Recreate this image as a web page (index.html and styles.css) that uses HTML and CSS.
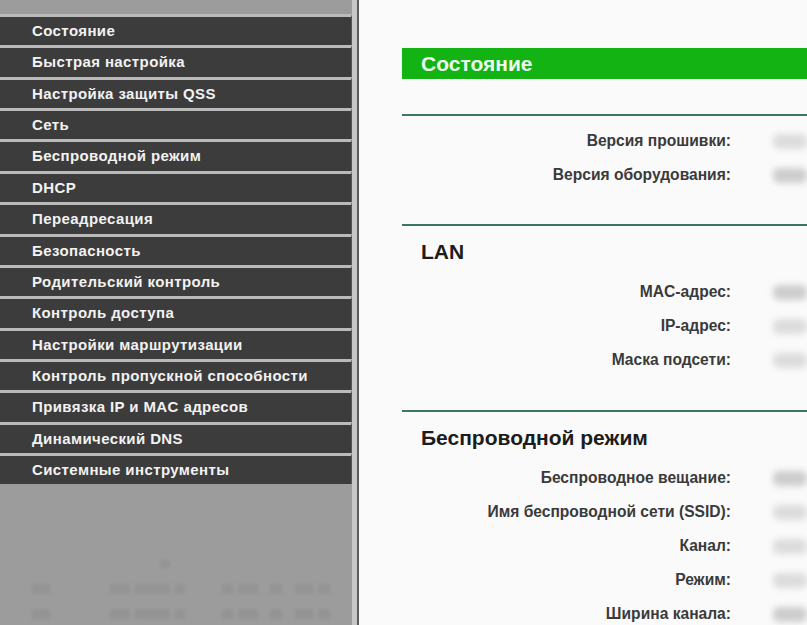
FILE: index.html
```html
<!DOCTYPE html>
<html lang="ru">
<head>
<meta charset="utf-8">
<title>Состояние</title>
<link rel="stylesheet" href="styles.css">
</head>
<body>
<div class="page">
  <aside class="sidebar">
    <ul class="menu">
      <li>Состояние</li>
      <li>Быстрая настройка</li>
      <li>Настройка защиты QSS</li>
      <li>Сеть</li>
      <li>Беспроводной режим</li>
      <li>DHCP</li>
      <li>Переадресация</li>
      <li>Безопасность</li>
      <li>Родительский контроль</li>
      <li>Контроль доступа</li>
      <li>Настройки маршрутизации</li>
      <li>Контроль пропускной способности</li>
      <li>Привязка IP и MAC адресов</li>
      <li>Динамический DNS</li>
      <li>Системные инструменты</li>
    </ul>
    <div class="ghost">
      <div class="ghost-dot"></div>
      <div class="ghost-row"><span class="g a"></span><span class="g b"></span><span class="g c"></span><span class="g d"></span><span class="g e"></span><span class="g f"></span><span class="g h"></span><span class="g i"></span><span class="g j"></span></div>
      <div class="ghost-row"><span class="g a"></span><span class="g b"></span><span class="g c"></span><span class="g d"></span><span class="g e"></span><span class="g f"></span><span class="g h"></span><span class="g i"></span><span class="g j"></span></div>
    </div>
  </aside>
  <div class="divider"><div class="divider-light"></div><div class="divider-dark"></div></div>
  <main class="content">
    <div class="title-bar">Состояние</div>
    <section class="section first">
      <div class="row"><span class="label">Версия прошивки:</span><span class="value v2"></span></div>
      <div class="row"><span class="label">Версия оборудования:</span><span class="value v1"></span></div>
    </section>
    <section class="section">
      <h2 class="heading">LAN</h2>
      <div class="row"><span class="label">MAC-адрес:</span><span class="value v1"></span></div>
      <div class="row"><span class="label">IP-адрес:</span><span class="value v2"></span></div>
      <div class="row"><span class="label">Маска подсети:</span><span class="value v2"></span></div>
    </section>
    <section class="section">
      <h2 class="heading">Беспроводной режим</h2>
      <div class="row"><span class="label">Беспроводное вещание:</span><span class="value v1"></span></div>
      <div class="row"><span class="label">Имя беспроводной сети (SSID):</span><span class="value v2"></span></div>
      <div class="row"><span class="label">Канал:</span><span class="value v2"></span></div>
      <div class="row"><span class="label">Режим:</span><span class="value v2"></span></div>
      <div class="row"><span class="label">Ширина канала:</span><span class="value v1"></span></div>
    </section>
  </main>
</div>
</body>
</html>
```
FILE: styles.css
```css
html, body {
  margin: 0;
  padding: 0;
  height: 100%;
  overflow: hidden;
}
body {
  font-family: "Liberation Sans", Arial, sans-serif;
  background: #fafafa;
}
.page {
  display: flex;
  height: 625px;
  width: 807px;
}
.sidebar {
  width: 352px;
  flex: none;
  background: #9c9c9c;
  display: flex;
  flex-direction: column;
}
.menu {
  list-style: none;
  margin: 0;
  padding: 14px 0 0 0;
}
.menu li {
  height: 28.36px;
  line-height: 28.36px;
  border-top: 3px solid #bababa;
  background: #3c3c3c;
  color: #f2f2f2;
  font-weight: bold;
  font-size: 15px;
  letter-spacing: 0.4px;
  padding-left: 32px;
  border-right: 1px solid #575757;
  white-space: nowrap;
}
.ghost {
  display: flex;
  flex-direction: column;
  padding: 76px 0 0 32px;
  filter: blur(1.5px);
}
.ghost-dot {
  width: 10px;
  height: 8px;
  background: #949494;
  margin-left: 128px;
  margin-bottom: 16px;
}
.ghost-row {
  display: flex;
  height: 12px;
  margin-bottom: 13px;
}
.g {
  display: block;
  height: 10px;
  background: #949494;
}
.g.a { width: 18px; margin-right: 60px; }
.g.b { width: 20px; margin-right: 5px; }
.g.c { width: 35px; margin-right: 5px; }
.g.d { width: 10px; margin-right: 37px; }
.g.e { width: 11px; margin-right: 5px; }
.g.f { width: 20px; margin-right: 12px; }
.g.h { width: 12px; margin-right: 13px; }
.g.i { width: 18px; margin-right: 5px; }
.g.j { width: 12px; }
.divider {
  flex: none;
  display: flex;
}
.divider-light {
  width: 5px;
  background: #c6c6c6;
}
.divider-dark {
  width: 2px;
  background: #5a5a5a;
}
.content {
  flex: 1;
  padding: 48px 0 0 43px;
  background: #fafafa;
  min-width: 0;
}
.title-bar {
  height: 31px;
  line-height: 31px;
  background: #12b312;
  color: #eefaee;
  font-weight: bold;
  font-size: 21px;
  padding-left: 19px;
}
.section {
  border-top: 2px solid #3b7563;
  display: flex;
  flex-direction: column;
}
.section.first {
  margin-top: 35px;
  padding-top: 8px;
  padding-bottom: 32px;
}
.section:nth-of-type(2) {
  padding-bottom: 33px;
}
.heading {
  margin: 0;
  padding: 11px 0 8px 19px;
  height: 30px;
  line-height: 30px;
  font-size: 21px;
  font-weight: bold;
  color: #1c1c1c;
}
.row {
  display: flex;
  align-items: center;
  height: 34px;
}
.label {
  width: 329px;
  flex: none;
  text-align: right;
  font-weight: bold;
  font-size: 15.6px;
  color: #3a3a3a;
  white-space: nowrap;
}
.value {
  display: block;
  margin-left: 42px;
  height: 15px;
  width: 60px;
  border-radius: 6px;
  filter: blur(3px);
}
.value.v1 { background: #cdcdcd; }
.value.v2 { background: #dcdcdc; }
```
